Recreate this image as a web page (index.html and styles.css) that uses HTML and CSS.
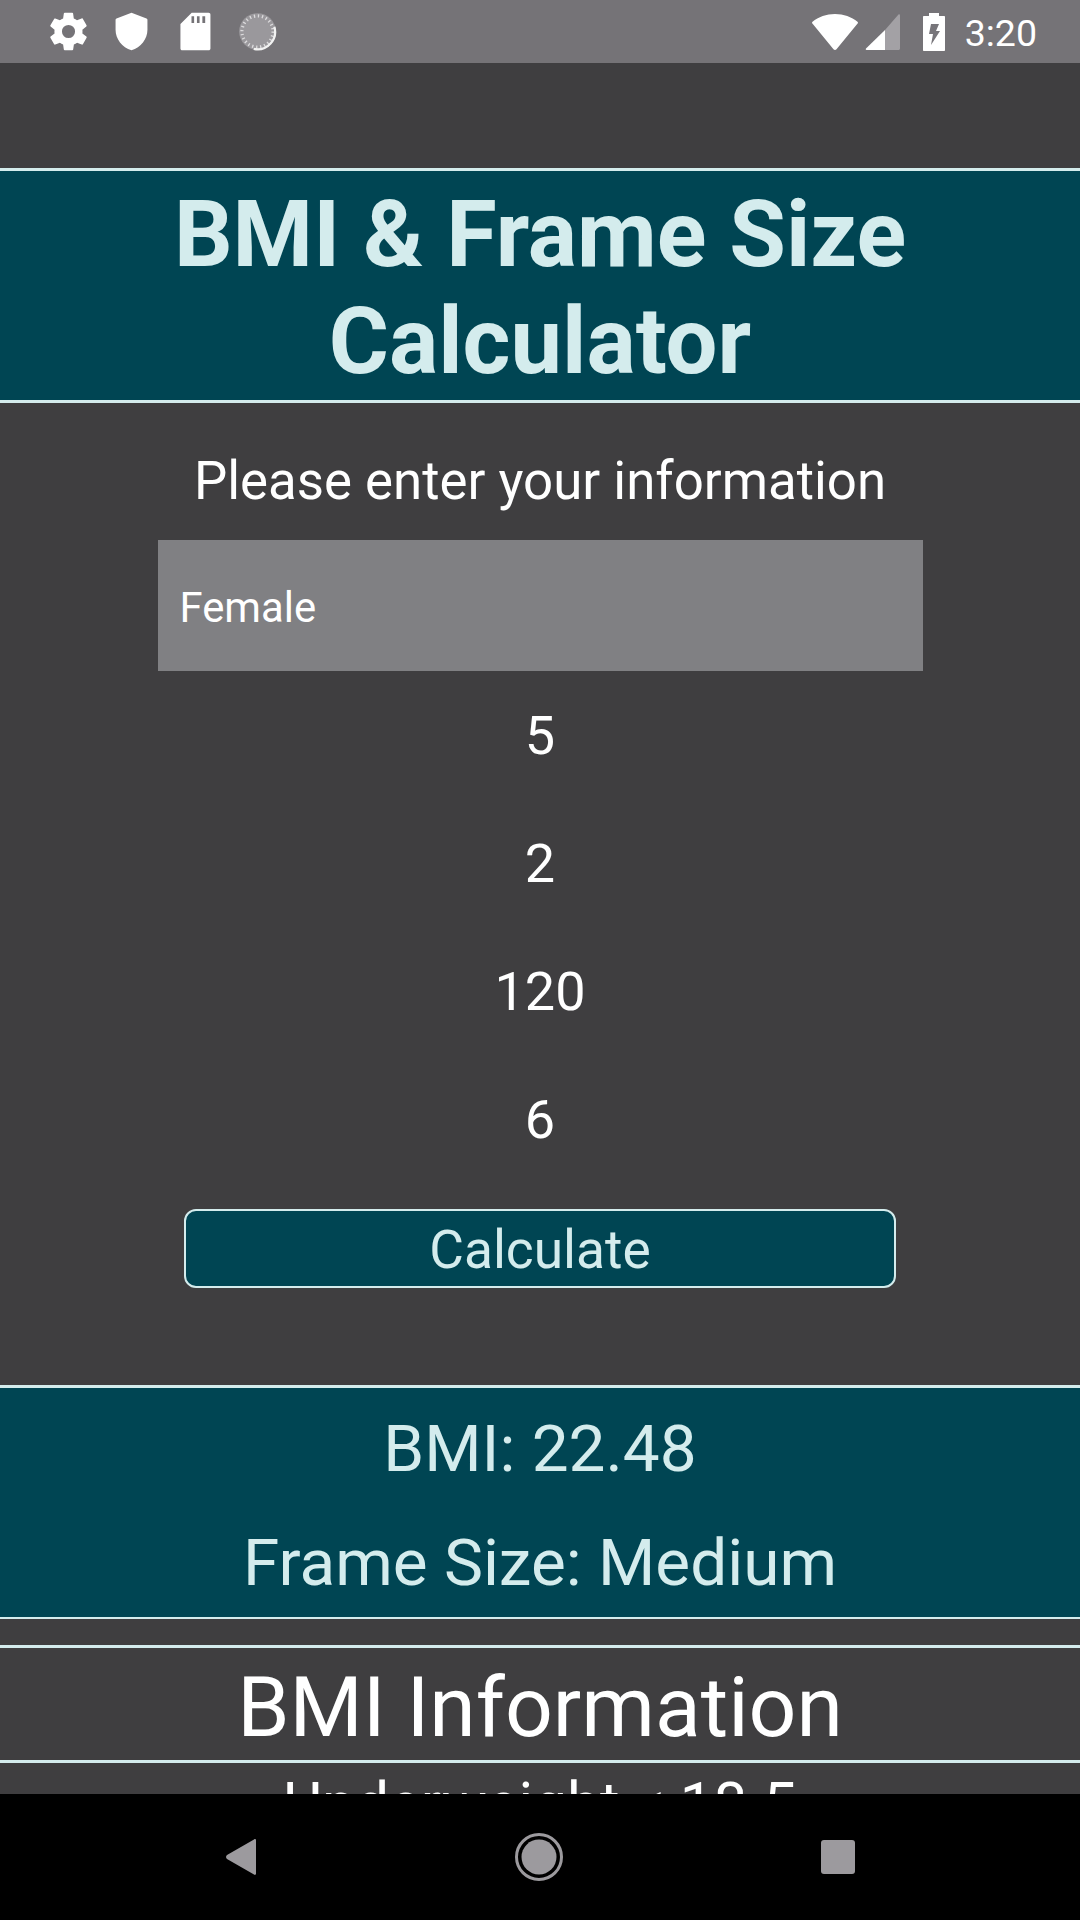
FILE: index.html
```html
<!DOCTYPE html>
<html>
<head>
<meta charset="utf-8">
<link rel="stylesheet" href="styles.css">
</head>
<body>
<div class="status">
  <div class="status-left">
    <svg class="ic" viewBox="0 0 24 24"><path fill="#fff" d="M19.4 13c.04-.33.06-.66.06-1s-.02-.67-.06-1l2.1-1.65c.19-.15.24-.42.12-.64l-2-3.46c-.12-.22-.38-.3-.61-.22l-2.49 1c-.52-.4-1.08-.73-1.69-.98l-.38-2.65A.49.49 0 0 0 14 2h-4c-.25 0-.46.18-.49.42l-.38 2.65c-.61.25-1.17.59-1.69.98l-2.49-1c-.23-.09-.49 0-.61.22l-2 3.46c-.13.22-.07.49.12.64L4.57 11c-.04.33-.07.67-.07 1s.03.67.07 1l-2.11 1.65c-.19.15-.24.42-.12.64l2 3.46c.12.22.38.3.61.22l2.49-1c.52.4 1.08.73 1.69.98l.38 2.65c.03.24.24.42.49.42h4c.25 0 .46-.18.49-.42l.38-2.65c.61-.25 1.17-.59 1.69-.98l2.49 1c.23.09.49 0 .61-.22l2-3.46c.12-.22.07-.49-.12-.64L19.4 13zM12 15.5a3.5 3.500 0 1 1 0-7 3.500 3.500 0 0 1 0 7z"/></svg>
    <svg class="ic" viewBox="0 0 24 24"><path fill="#fff" d="M12 2 4 5c-.3.1-.5.400-.5.700V11c0 5 3.500 9.300 8.500 11 5-1.700 8.500-6 8.500-11V5.700c0-.3-.2-.6-.5-.7z"/></svg>
    <svg class="ic" viewBox="0 0 24 24"><path fill="#fff" d="M19.500 2H10.500L4.500 8v13c0 .6.400 1 1 1h14c.6 0 1-.4 1-1V3c0-.6-.4-1-1-1zM11.800 7.500h-1.400V3.800h1.400zm2.900 0h-1.400V3.800h1.400zm3 0h-1.500V3.800h1.500z"/></svg>
    <svg class="ic" viewBox="0 0 24 24"><circle cx="12" cy="12" r="9.800" fill="#9a989c"/><circle cx="12" cy="12" r="8.300" fill="none" stroke="#dcdbdd" stroke-width="1.700" stroke-dasharray=".7 1.470"/><path fill="none" stroke="#f2f2f2" stroke-width="1.200" d="M21 9.500A9.400 9.400 0 0 1 10 21.300"/></svg>
  </div>
  <div class="status-right">
    <svg class="wifi" viewBox="0 0 46 36"><path fill="#fff" d="M23 36c-.6 0-1.100-.3-1.500-.7L.4 9.600C-.1 9-.1 8.200.5 7.700 6.500 2.900 14.400 0 23 0s16.500 2.900 22.500 7.700c.6.500.6 1.300.1 1.900L24.500 35.300c-.4.400-.9.700-1.500.7z"/></svg>
    <svg class="signal" viewBox="0 0 35 36"><path fill="#fff" d="M20 16 1 34.500c-.6.7-.2 1.500.5 1.500H20z"/><path fill="#a3a1a5" d="M20 36V16L33.500.6c.6-.6 1.500-.2 1.500.6V34.500c0 .8-.7 1.500-1.500 1.500z"/></svg>
    <svg class="battery" viewBox="0 0 22 38"><path fill="#fff" d="M6 0h10v3h5c.6 0 1 .4 1 1v33c0 .6-.4 1-1 1H1c-.6 0-1-.4-1-1V4c0-.6.4-1 1-1h5z"/><path fill="#77757a" d="M8 11h8l-3 7h4L8 32l2-11H6z"/></svg>
    <span class="clock">3:20</span>
  </div>
</div>
<main class="app">
  <h1 class="title">BMI &amp; Frame Size<br>Calculator</h1>
  <section class="form">
    <p class="prompt">Please enter your information</p>
    <div class="select">Female</div>
    <div class="fields">
      <div class="field">5</div>
      <div class="field">2</div>
      <div class="field">120</div>
      <div class="field">6</div>
    </div>
    <button class="calc">Calculate</button>
  </section>
  <section class="result">
    <p class="bmi">BMI: 22.48</p>
    <p class="frame">Frame Size: Medium</p>
  </section>
  <h2 class="info">BMI Information</h2>
  <p class="under">Underweight &lt; 18.5</p>
</main>
<div class="nav">
  <svg class="nav-back" viewBox="0 0 30 36"><path fill="#9c9a9e" d="M28 .5c1-.8 2-.3 2 1v33c0 1.300-1 1.800-2 1L1 20c-1.300-1-1.300-3 0-4z"/></svg>
  <svg class="nav-home" viewBox="0 0 48 48"><circle cx="24" cy="24" r="22.500" fill="none" stroke="#9c9a9e" stroke-width="3"/><circle cx="24" cy="24" r="17.500" fill="#9c9a9e"/></svg>
  <svg class="nav-recent" viewBox="0 0 34 34"><rect width="34" height="34" rx="3" fill="#9c9a9e"/></svg>
</div>
</body>
</html>
```
FILE: styles.css
```css
* { box-sizing: border-box; }
html, body { margin: 0; padding: 0; }
body {
  width: 1080px;
  height: 1920px;
  overflow: hidden;
  background: #3f3e40;
  font-family: Roboto, sans-serif;
  color: #fff;
  display: flex;
  flex-direction: column;
}
.status {
  height: 63px;
  flex: none;
  background: #757377;
  display: flex;
  justify-content: space-between;
  align-items: center;
  padding: 0 43px 0 46px;
}
.status-left { display: flex; align-items: center; gap: 18px; }
.ic { width: 45px; height: 45px; display: block; }
.status-right { display: flex; align-items: center; }
.wifi { width: 46px; height: 36px; display: block; }
.signal { width: 35px; height: 36px; margin-left: 7px; display: block; }
.battery { width: 22px; height: 38px; margin-left: 23px; display: block; }
.clock { font-size: 37.5px; margin-left: 20px; padding-top: 3px; line-height: 38px; }
.app {
  flex: 1;
  min-height: 0;
  overflow: hidden;
  padding-top: 105px;
}
.title {
  margin: 0;
  height: 235px;
  background: #004553;
  border-top: 3px solid #d4eced;
  border-bottom: 3px solid #d4eced;
  color: #d4eced;
  font-size: 92px;
  font-weight: 700;
  line-height: 107px;
  text-align: center;
  padding-top: 10px;
}
.form { height: 982px; display: flex; flex-direction: column; align-items: center; padding-top: 48px; }
.prompt { font-size: 52.8px; line-height: 60px; margin: 0; }
.select {
  width: 765px;
  height: 131px;
  margin-top: 29px;
  background: #808083;
  font-size: 41.8px;
  display: flex;
  align-items: center;
  padding: 4px 0 0 22px;
}
.fields { width: 100%; margin-top: 1px; }
.field {
  height: 128px;
  text-align: center;
  font-size: 54px;
  line-height: 128px;
}
.calc {
  width: 712px;
  height: 79px;
  margin-top: 25px;
  background: #004553;
  border: 2.5px solid #d4eced;
  border-radius: 12px;
  color: #d4eced;
  font: 53.3px Roboto, sans-serif;
  padding: 2px 0 0;
}
.result {
  height: 234px;
  background: #004553;
  border-top: 3px solid #d4eced;
  border-bottom: 2px solid #d4eced;
  color: #d4eced;
  text-align: center;
  font-size: 65.7px;
}
.result p { margin: 0; line-height: 72px; }
.bmi { padding-top: 25px; }
.frame { padding-top: 42px; }
.info {
  margin: 26px 0 0;
  height: 118px;
  border-top: 3px solid #d4eced;
  border-bottom: 3px solid #d4eced;
  font-size: 84px;
  font-weight: 400;
  line-height: 112px;
  text-align: center;
  padding-top: 4px;
}
.under { margin: 0; padding-top: 5px; text-align: center; font-size: 60px; line-height: 72px; }
.nav {
  height: 126px;
  flex: none;
  background: #000;
  display: flex;
  justify-content: space-between;
  align-items: center;
  padding: 0 225px 0 226px;
}
.nav-back { width: 30px; height: 36px; }
.nav-home { width: 48px; height: 48px; }
.nav-recent { width: 34px; height: 34px; }
```
